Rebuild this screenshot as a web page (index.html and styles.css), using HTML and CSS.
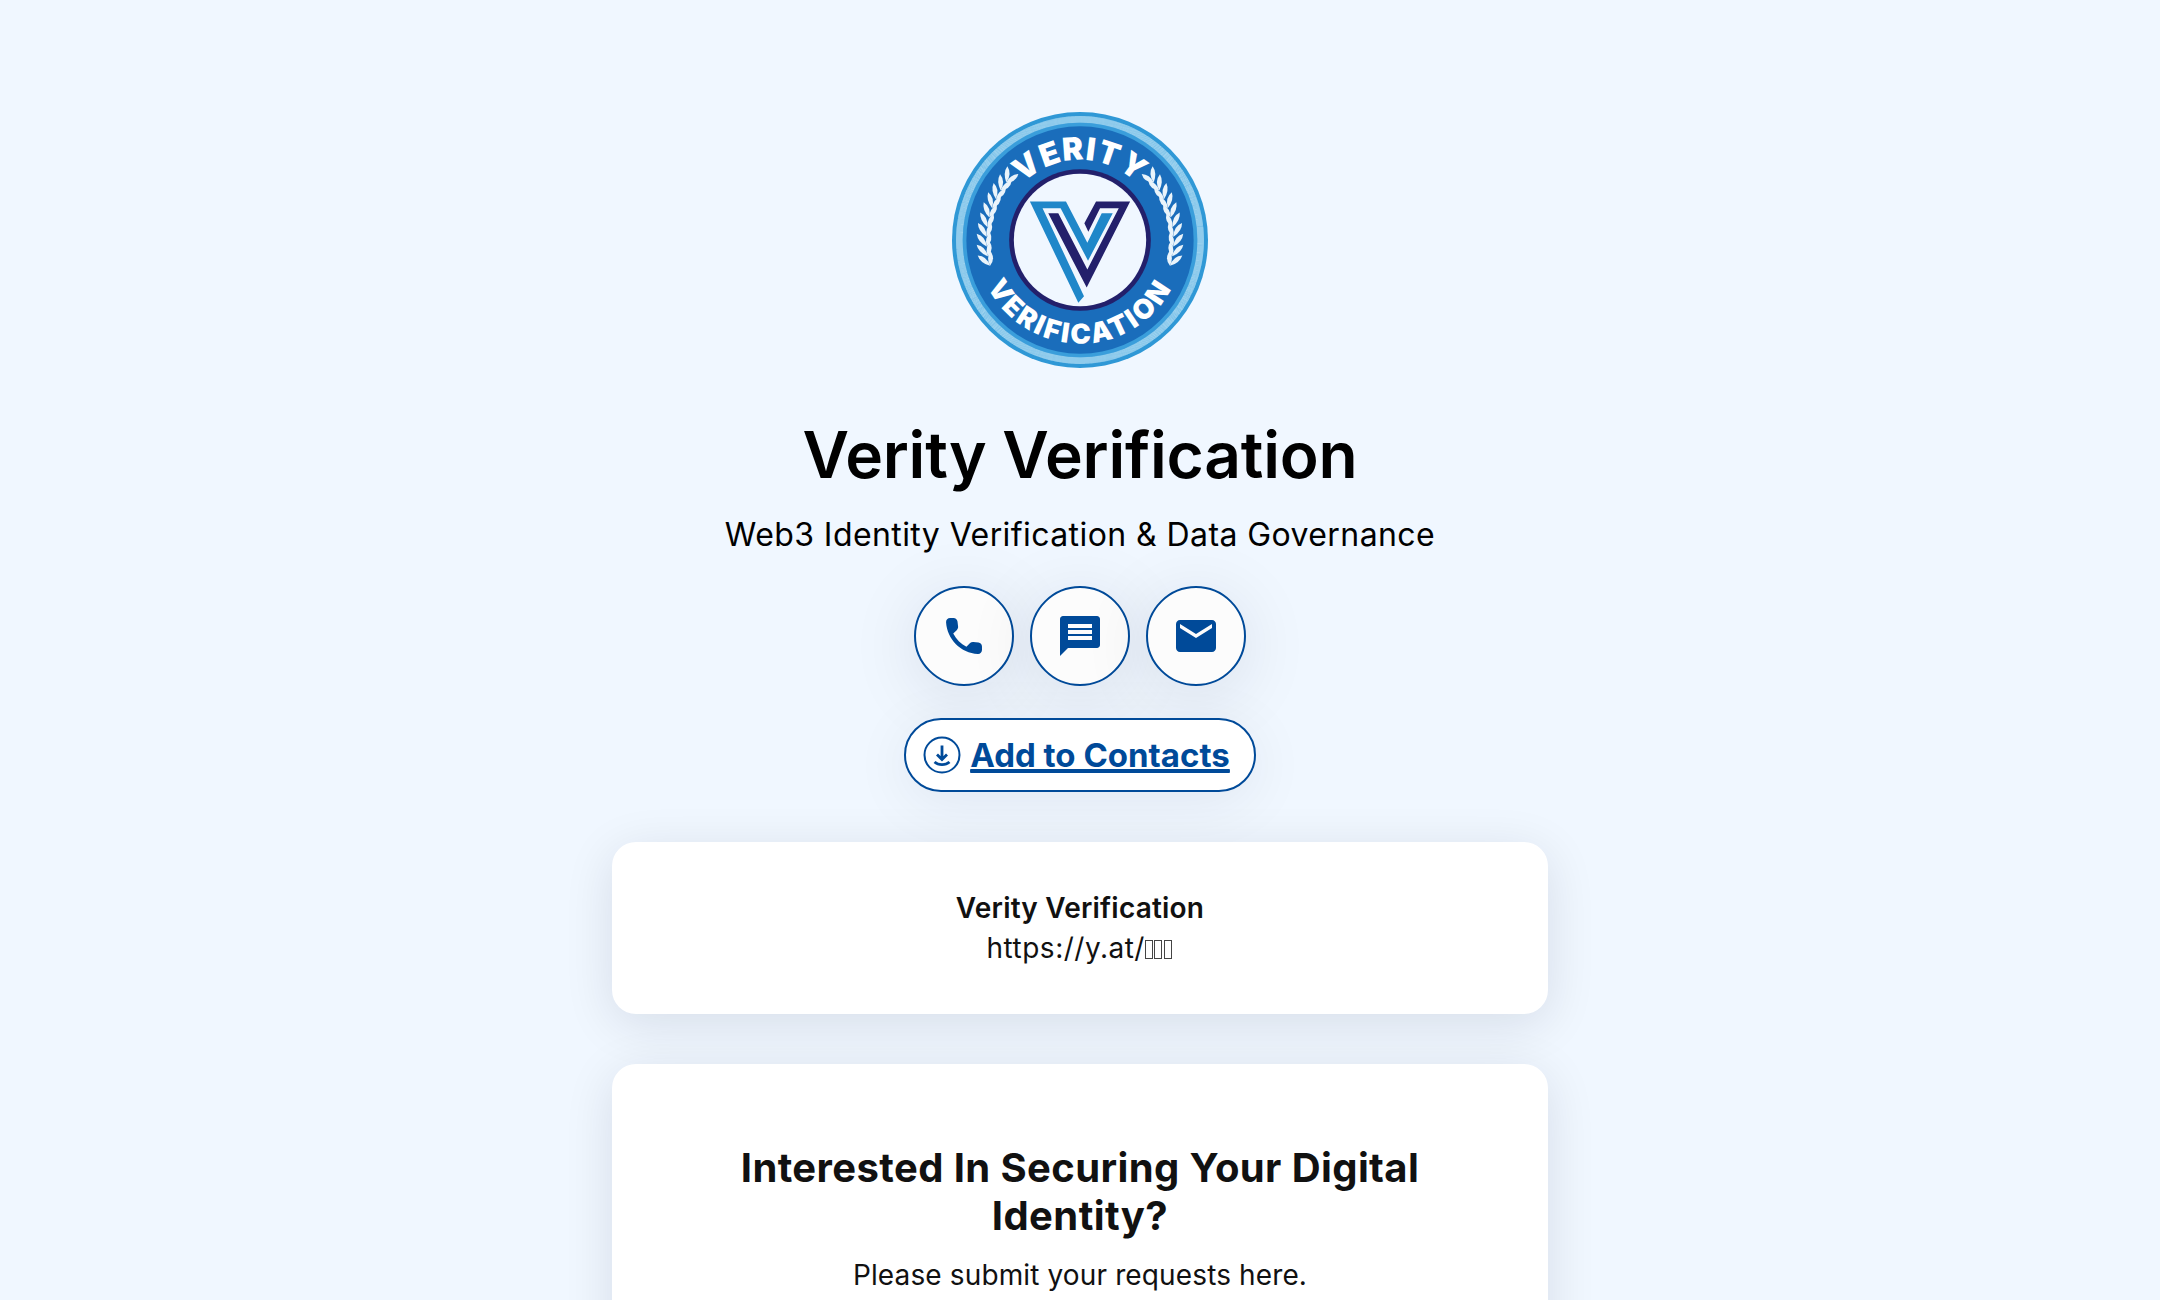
FILE: index.html
```html
<!DOCTYPE html>
<html lang="en">
<head>
<meta charset="utf-8">
<title>Verity Verification</title>
<link rel="stylesheet" href="styles.css">
</head>
<body>
<main class="page">
  <svg class="logo" viewBox="67 37 766 766" aria-label="Verity Verification logo">
    <defs>
      <path id="arcTop" d="M 210 420 a 240 240 0 0 1 480 0" />
      <path id="arcBottom" d="M 140 420 a 310 310 0 0 0 620 0" />
      <g id="leaf">
        <path d="M450 140 q 16 -26 40 -27 q -9 26 -40 27 Z"/>
        <path d="M450 140 q 26 -5 42 13 q -25 10 -42 -13 Z"/>
      </g>
      <g id="laurel">
        <use href="#leaf" transform="rotate(-106 450 420)"/>
        <use href="#leaf" transform="rotate(-100 450 420)"/>
        <use href="#leaf" transform="rotate(-94 450 420)"/>
        <use href="#leaf" transform="rotate(-88 450 420)"/>
        <use href="#leaf" transform="rotate(-82 450 420)"/>
        <use href="#leaf" transform="rotate(-76 450 420)"/>
        <use href="#leaf" transform="rotate(-70 450 420)"/>
        <use href="#leaf" transform="rotate(-64 450 420)"/>
        <use href="#leaf" transform="rotate(-58 450 420)"/>
        <use href="#leaf" transform="rotate(-52 450 420)"/>
      </g>
    </defs>
    <circle cx="450" cy="420" r="383" fill="#2f98d6"/>
    <circle cx="450" cy="420" r="371" fill="#6cb9e5"/>
    <circle class="hatch" cx="450" cy="420" r="361"/>
    <circle cx="450" cy="420" r="351" fill="#3a9edb"/>
    <circle cx="450" cy="420" r="340" fill="#1a6dbb"/>
    <text class="logo-text"><textPath href="#arcTop" startOffset="50%" text-anchor="middle">VERITY</textPath></text>
    <text class="logo-text logo-text-small"><textPath href="#arcBottom" startOffset="50%" text-anchor="middle">VERIFICATION</textPath></text>
    <use href="#laurel" class="laurel"/>
    <use href="#laurel" class="laurel" transform="translate(900 0) scale(-1 1)"/>
    <circle cx="450" cy="420" r="212" fill="#23206b"/>
    <circle cx="450" cy="420" r="198" fill="#f0f7ff"/>
    <polygon points="300,305 408,305 472,428 515,340 548,340 474,482 392,325 338,325 462,588 445,608" fill="#1f87c9"/>
    <polygon points="498,305 600,305 470,562 355,340 385,340 472,508 566,325 510,325 475,395 463,370" fill="#23206b"/>
  </svg>
  <h1 class="title">Verity Verification</h1>
  <p class="subtitle">Web3 Identity Verification &amp; Data Governance</p>
  <div class="actions">
    <a class="round" href="#"><svg class="ic" viewBox="0 0 24 24"><path d="M19.23 15.26l-2.54-.29c-.61-.07-1.21.14-1.64.57l-1.84 1.84c-2.83-1.44-5.15-3.75-6.59-6.59l1.85-1.85c.43-.43.64-1.03.57-1.64l-.29-2.52c-.12-1.01-.97-1.77-1.99-1.77H5.03c-1.13 0-2.07.94-2 2.07.53 8.54 7.36 15.36 15.89 15.89 1.13.07 2.07-.87 2.07-2v-1.73c.01-1.01-.75-1.86-1.76-1.98z"/></svg></a>
    <a class="round" href="#"><svg class="ic" viewBox="0 0 24 24"><path d="M20.500 2h-17C2.700 2 2 2.700 2 3.500V22l4-4h14.500c.8 0 1.500-.7 1.500-1.500v-13C22 2.700 21.300 2 20.500 2zM18 14H6v-2h12v2zm0-3H6V9h12v2zm0-3H6V6h12v2z"/></svg></a>
    <a class="round" href="#"><svg class="ic" viewBox="0 0 24 24"><path d="M20 4H4c-1.100 0-1.990.9-1.990 2L2 18c0 1.100.9 2 2 2h16c1.100 0 2-.9 2-2V6c0-1.100-.9-2-2-2zm0 4l-8 5-8-5V6l8 5 8-5v2z"/></svg></a>
  </div>
  <a class="contacts" href="#">
    <svg class="dl" viewBox="0 0 38 38" fill="none" stroke="#004a99" stroke-width="2"><circle cx="19" cy="19" r="17.500"/><path d="M19 9.500v14M14 18.500l5 5 5-5" stroke-width="2.800"/><path d="M11.500 26c4 3.500 11 3.500 15 0" stroke-width="2.800"/></svg>
    <span>Add to Contacts</span>
  </a>
  <section class="card card-info">
    <strong class="name">Verity Verification</strong>
    <span class="url">https://y.at/<i class="tofu"></i><i class="tofu"></i><i class="tofu"></i></span>
  </section>
  <section class="card card-form">
    <h2 class="form-title">Interested In Securing Your Digital Identity?</h2>
    <p class="form-text">Please submit your requests here.</p>
  </section>
</main>
</body>
</html>
```
FILE: styles.css
```css
* { box-sizing: border-box; }
html, body { margin: 0; height: 1300px; overflow: hidden; }
body { background: #f0f7ff; font-family: Inter, "Noto Sans", sans-serif; color: #000; }
.page { display: flex; flex-direction: column; align-items: center; padding-top: 112px; }
.logo { width: 256px; height: 256px; display: block; }
.hatch { fill: none; stroke: #b4def3; stroke-width: 20; stroke-dasharray: 1.5 1.5; }
.logo-text { font-family: Inter, sans-serif; font-weight: 900; font-size: 94px; fill: #fff; letter-spacing: 3px; }
.logo-text-small { font-size: 82px; letter-spacing: 8px; }
.laurel { fill: #eaf4fb; }
.title { margin: 48px 0 0; font-size: 64px; line-height: 78px; font-weight: 600; letter-spacing: -0.2px; }
.subtitle { margin: 19px 0 0; font-size: 32px; line-height: 44px; letter-spacing: 0.42px; }
.actions { display: flex; gap: 16px; margin-top: 29px; }
.round { width: 100px; height: 100px; border-radius: 50%; border: 2px solid #004a99; background: #fcfcfc; display: flex; align-items: center; justify-content: center; box-shadow: 0 10px 70px rgba(0, 20, 50, .1); }
.ic { width: 48px; height: 48px; fill: #004a99; }
.contacts { display: flex; align-items: center; gap: 9px; margin-top: 32px; height: 74px; padding: 0 24px 0 17px; border: 2px solid #004a99; border-radius: 37px; background: #fff; color: #004a99; font-size: 33px; font-weight: 700; line-height: 38px; box-shadow: 0 10px 60px rgba(0, 20, 50, .07); }
.contacts span { text-decoration: underline; text-underline-offset: 3px; margin-top: -1px; }
.dl { width: 38px; height: 38px; }
.card { width: 936px; background: #fff; border-radius: 24px; box-shadow: 0 10px 50px rgba(0, 20, 50, .11); text-align: center; color: #111; }
.card-info { margin-top: 50px; height: 172px; display: flex; flex-direction: column; justify-content: center; align-items: center; font-size: 28px; line-height: 40px; }
.name { font-weight: 600; letter-spacing: 0.2px; }
.url { letter-spacing: 0.5px; }
.tofu { display: inline-block; width: 8px; height: 19px; margin-right: 1.500px; border: 1px solid #444; vertical-align: -1px; }
.card-form { margin-top: 50px; padding: 80px 64px; height: 600px; }
.form-title { margin: 0; font-size: 40px; line-height: 48px; font-weight: 700; letter-spacing: 0.4px; }
.form-text { margin: 15px 0 0; font-size: 28px; line-height: 40px; letter-spacing: 0.13px; }
```
